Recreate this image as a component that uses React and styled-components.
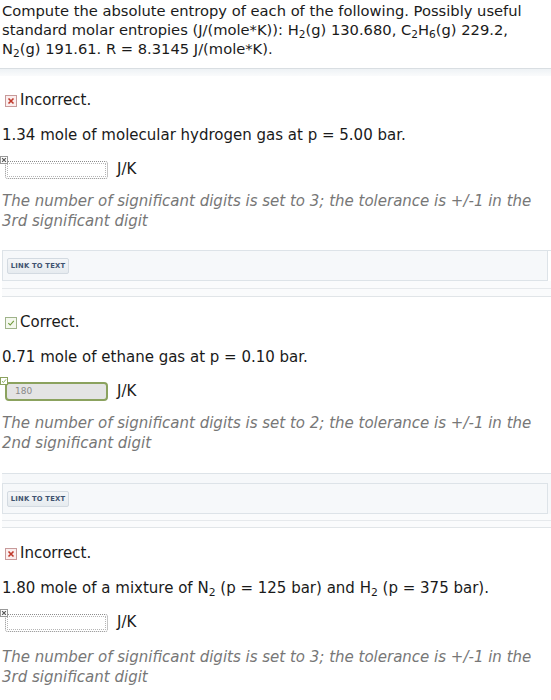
import React from "react";
import styled, { createGlobalStyle } from "styled-components";

const Global = createGlobalStyle`
  html, body { margin: 0; padding: 0; background: #fff; }
  body { font-family: "DejaVu Sans", Verdana, sans-serif; color: #1a1a1a; }
`;

const Page = styled.div`
  width: 551px;
  overflow: hidden;
  font-size: 15px;
  line-height: 19px;
`;

const Intro = styled.div`
  padding: 1px 2px 0 2px;
  white-space: nowrap;
  font-size: 14.7px;
`;

const HeaderRule = styled.div`
  margin-top: 10px;
  height: 7px;
  border-top: 1px solid #d9dee2;
  background: linear-gradient(#eef2f5, #fafbfc);
`;

const Part = styled.div`
  padding: 0 0 0 2px;
`;

const Status = styled.div`
  display: flex;
  align-items: center;
  gap: 3px;
  padding-left: 3px;
  margin-top: ${(p) => p.$top}px;
  height: 19px;
`;

const StatusBox = styled.span`
  width: 10px;
  height: 10px;
  border: 1px solid ${(p) => (p.$ok ? "#9fb38a" : "#c79a9a")};
  background: ${(p) => (p.$ok ? "#f4f8ee" : "#fbeeee")};
  display: inline-flex;
  align-items: center;
  justify-content: center;
`;

const Question = styled.div`
  margin-top: 16px;
  white-space: nowrap;
`;

const AnswerRow = styled.div`
  display: flex;
  align-items: center;
  gap: 9px;
  margin-top: 15px;
  margin-left: 3px;
`;

const InputWrap = styled.div`
  position: relative;
`;

const Field = styled.div`
  box-sizing: border-box;
  width: 103px;
  height: ${(p) => (p.$ok ? 19 : 18)}px;
  border: ${(p) => (p.$ok ? "2px solid #8ba25e" : "1px dotted #8c8c8c")};
  outline: ${(p) => (p.$ok ? "none" : "1px dotted #b5b5b5")};
  outline-offset: -3px;
  border-radius: ${(p) => (p.$ok ? 4 : 3)}px;
  background: ${(p) => (p.$ok ? "#e4e4e4" : "#fff")};
  font-size: 9px;
  line-height: 15px;
  color: #8a8a8a;
  padding-left: 8px;
`;

const Badge = styled.span`
  position: absolute;
  left: -5px;
  top: -5px;
  width: 6px;
  height: 6px;
  border: 1px solid ${(p) => (p.$ok ? "#8ba25e" : "#999")};
  background: #fff;
  display: flex;
  align-items: center;
  justify-content: center;
`;

const Unit = styled.span``;

const Hint = styled.div`
  margin-top: ${(p) => p.$top}px;
  font-style: italic;
  color: #777;
  line-height: 19.5px;
  white-space: nowrap;
`;

const Toolbar = styled.div`
  margin-top: ${(p) => p.$top}px;
  margin-left: 2px;
  border-top: 1px solid #dde3e8;
  ${(p) => (p.$tall ? "padding-top: 9px; background: #f6f8fa;" : "")}
`;

const ToolbarBox = styled.div`
  border: 1px solid #dde3e8;
  border-top: ${(p) => (p.$tall ? "1px solid #dde3e8" : "none")};
  background: #f6f8fa;
  height: 29px;
  display: flex;
  align-items: center;
  padding-left: 4px;
  margin-right: 3px;
`;

const LinkButton = styled.button`
  font-family: "DejaVu Sans", Verdana, sans-serif;
  font-size: 6.8px;
  font-weight: bold;
  letter-spacing: 0.2px;
  color: #3f5370;
  background: linear-gradient(#f4f6f8, #e6ebef);
  border: 1px solid #d3dae1;
  border-radius: 2px;
  height: 16px;
  width: 62px;
  padding: 0;
`;

const BottomBand = styled.div`
  height: ${(p) => p.$h}px;
  border-bottom: 1px solid #e1e5e8;
  background: #fafbfc;
  position: relative;
  &::after {
    content: "";
    position: absolute;
    left: 0;
    right: 0;
    top: ${(p) => p.$line}px;
    border-top: 1px solid #e6e9ec;
  }
`;

const Sub = styled.sub`
  font-size: 0.72em;
  vertical-align: -3px;
  line-height: 0;
`;

const Cross = ({ size = 8, color = "#c0392b" }) => (
  <svg width={size} height={size} viewBox="0 0 8 8">
    <path d="M1.5 1.5 L6.5 6.5 M6.5 1.5 L1.5 6.5" stroke={color} strokeWidth="1.6" />
  </svg>
);

const Check = ({ size = 8, color = "#6f9a3a" }) => (
  <svg width={size} height={size} viewBox="0 0 8 8">
    <path d="M1.3 4.2 L3.2 6 L6.8 1.8" stroke={color} strokeWidth="1.1" fill="none" />
  </svg>
);

function PartBlock({ ok, statusTop, question, value, digits, place, toolbarTop, tall, hintTop = 13 }) {
  return (
    <>
      <Part>
        <Status $top={statusTop}>
          <StatusBox $ok={ok}>{ok ? <Check /> : <Cross />}</StatusBox>
          <span>{ok ? "Correct." : "Incorrect."}</span>
        </Status>
        <Question>{question}</Question>
        <AnswerRow>
          <InputWrap>
            <Badge $ok={ok}>{ok ? <Check size={6} /> : <Cross size={6} color="#555" />}</Badge>
            <Field $ok={ok}>{value}</Field>
          </InputWrap>
          <Unit>J/K</Unit>
        </AnswerRow>
        <Hint $top={hintTop}>
          The number of significant digits is set to {digits}; the tolerance is +/-1 in the
          <br />
          {place} significant digit
        </Hint>
      </Part>
      {toolbarTop != null && (
        <Toolbar $top={toolbarTop} $tall={tall}>
          <ToolbarBox $tall={tall}>
            <LinkButton>LINK TO TEXT</LinkButton>
          </ToolbarBox>
          <BottomBand $h={tall ? 13 : 15} $line={tall ? 6 : 7} />
        </Toolbar>
      )}
    </>
  );
}

export default function App() {
  return (
    <Page>
      <Global />
      <Intro>
        Compute the absolute entropy of each of the following. Possibly useful
        <br />
        standard molar entropies (J/(mole*K)): H<Sub>2</Sub>(g) 130.680, C<Sub>2</Sub>H<Sub>6</Sub>(g) 229.2,
        <br />
        N<Sub>2</Sub>(g) 191.61. R = 8.3145 J/(mole*K).
      </Intro>
      <HeaderRule />
      <PartBlock
        ok={false}
        statusTop={15}
        question="1.34 mole of molecular hydrogen gas at p = 5.00 bar."
        value=""
        digits={3}
        place="3rd"
        toolbarTop={19}
      />
      <PartBlock
        ok
        statusTop={16}
        question="0.71 mole of ethane gas at p = 0.10 bar."
        value="180"
        digits={2}
        place="2nd"
        toolbarTop={20}
        tall
      />
      <PartBlock
        ok={false}
        statusTop={16}
        question={
          <>
            1.80 mole of a mixture of N<Sub>2</Sub> (p = 125 bar) and H<Sub>2</Sub> (p = 375 bar).
          </>
        }
        value=""
        digits={3}
        place="3rd"
        hintTop={16}
      />
    </Page>
  );
}
